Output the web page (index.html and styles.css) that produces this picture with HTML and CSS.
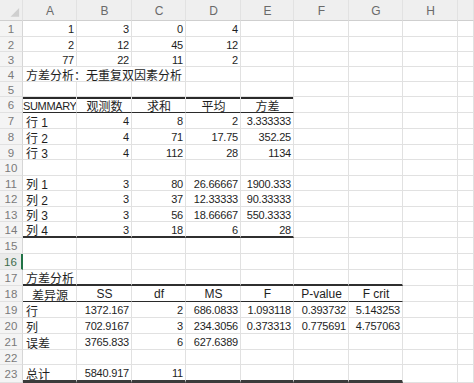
FILE: index.html
```html
<!DOCTYPE html>
<html lang="zh-CN">
<head>
<meta charset="utf-8">
<title>方差分析</title>
<link rel="stylesheet" href="styles.css">
</head>
<body>
<div class="sheet">
  <div class="r">
    <div class="corner"><svg width="23" height="20" viewBox="0 0 23 20"><polygon points="20,8 20,17 11,17" fill="#cfcfcf"/></svg></div>
    <div class="ch">A</div><div class="ch">B</div><div class="ch">C</div><div class="ch">D</div><div class="ch">E</div><div class="ch">F</div><div class="ch">G</div><div class="ch">H</div><div class="ch"></div>
  </div>
  <div class="r">
    <div class="rh">1</div><div class="n">1</div><div class="n">3</div><div class="n">0</div><div class="n">4</div><div></div><div></div><div></div><div></div><div></div>
  </div>
  <div class="r">
    <div class="rh">2</div><div class="n">2</div><div class="n">12</div><div class="n">45</div><div class="n">12</div><div></div><div></div><div></div><div></div><div></div>
  </div>
  <div class="r">
    <div class="rh">3</div><div class="n">77</div><div class="n">22</div><div class="n">11</div><div class="n">2</div><div></div><div></div><div></div><div></div><div></div>
  </div>
  <div class="r">
    <div class="rh">4</div><div class="t span3">方差分析：无重复双因素分析</div><div></div><div></div><div></div><div></div><div></div><div></div>
  </div>
  <div class="r">
    <div class="rh">5</div><div></div><div></div><div></div><div></div><div></div><div></div><div></div><div></div><div></div>
  </div>
  <div class="r">
    <div class="rh">6</div><div class="t hd sum">SUMMARY</div><div class="m hd">观测数</div><div class="m hd">求和</div><div class="m hd">平均</div><div class="m hd">方差</div><div></div><div></div><div></div><div></div>
  </div>
  <div class="r">
    <div class="rh">7</div><div class="t">行 1</div><div class="n">4</div><div class="n">8</div><div class="n">2</div><div class="n">3.333333</div><div></div><div></div><div></div><div></div>
  </div>
  <div class="r">
    <div class="rh">8</div><div class="t">行 2</div><div class="n">4</div><div class="n">71</div><div class="n">17.75</div><div class="n">352.25</div><div></div><div></div><div></div><div></div>
  </div>
  <div class="r">
    <div class="rh">9</div><div class="t">行 3</div><div class="n">4</div><div class="n">112</div><div class="n">28</div><div class="n">1134</div><div></div><div></div><div></div><div></div>
  </div>
  <div class="r">
    <div class="rh">10</div><div></div><div></div><div></div><div></div><div></div><div></div><div></div><div></div><div></div>
  </div>
  <div class="r">
    <div class="rh">11</div><div class="t">列 1</div><div class="n">3</div><div class="n">80</div><div class="n">26.66667</div><div class="n">1900.333</div><div></div><div></div><div></div><div></div>
  </div>
  <div class="r">
    <div class="rh">12</div><div class="t">列 2</div><div class="n">3</div><div class="n">37</div><div class="n">12.33333</div><div class="n">90.33333</div><div></div><div></div><div></div><div></div>
  </div>
  <div class="r">
    <div class="rh">13</div><div class="t">列 3</div><div class="n">3</div><div class="n">56</div><div class="n">18.66667</div><div class="n">550.3333</div><div></div><div></div><div></div><div></div>
  </div>
  <div class="r">
    <div class="rh">14</div><div class="t end2">列 4</div><div class="n end2">3</div><div class="n end2">18</div><div class="n end2">6</div><div class="n end2">28</div><div></div><div></div><div></div><div></div>
  </div>
  <div class="r">
    <div class="rh">15</div><div></div><div></div><div></div><div></div><div></div><div></div><div></div><div></div><div></div>
  </div>
  <div class="r">
    <div class="rh active">16</div><div></div><div></div><div></div><div></div><div></div><div></div><div></div><div></div><div></div>
  </div>
  <div class="r">
    <div class="rh">17</div><div class="t end2">方差分析</div><div class="end2"></div><div class="end2"></div><div class="end2"></div><div class="end2"></div><div class="end2"></div><div class="end2"></div><div></div><div></div>
  </div>
  <div class="r">
    <div class="rh">18</div><div class="m hd2">差异源</div><div class="m hd2">SS</div><div class="m hd2">df</div><div class="m hd2">MS</div><div class="m hd2">F</div><div class="m hd2">P-value</div><div class="m hd2">F crit</div><div></div><div></div>
  </div>
  <div class="r">
    <div class="rh">19</div><div class="t">行</div><div class="n">1372.167</div><div class="n">2</div><div class="n">686.0833</div><div class="n">1.093118</div><div class="n">0.393732</div><div class="n">5.143253</div><div></div><div></div>
  </div>
  <div class="r">
    <div class="rh">20</div><div class="t">列</div><div class="n">702.9167</div><div class="n">3</div><div class="n">234.3056</div><div class="n">0.373313</div><div class="n">0.775691</div><div class="n">4.757063</div><div></div><div></div>
  </div>
  <div class="r">
    <div class="rh">21</div><div class="t">误差</div><div class="n">3765.833</div><div class="n">6</div><div class="n">627.6389</div><div></div><div></div><div></div><div></div><div></div>
  </div>
  <div class="r">
    <div class="rh">22</div><div></div><div></div><div></div><div></div><div></div><div></div><div></div><div></div><div></div>
  </div>
  <div class="r">
    <div class="rh">23</div><div class="t end3">总计</div><div class="n end3">5840.917</div><div class="n end3">11</div><div class="end3"></div><div class="end3"></div><div class="end3"></div><div class="end3"></div><div></div><div></div>
  </div>
</div>
</body>
</html>
```
FILE: styles.css
```css
html, body {
  margin: 0;
  padding: 0;
  background: #ffffff;
}

.sheet {
  display: grid;
  grid-template-columns: 23px 54px 55px 54px 55px 53px 55px 54px 55px 1fr;
  grid-template-rows: 21px 16px 15px 15px 15px 15px 16px 16px 16px 15px 16px 15px 16px 15px 16px 16px 16px 16px 16px 16px 16px 16px 15px 18px;
  width: 474px;
  height: 383px;
  overflow: hidden;
  font-family: "Liberation Sans", "Noto Sans CJK SC", sans-serif;
  font-size: 11px;
  color: #1e1e1e;
}

.r {
  display: contents;
}

.r > div {
  box-sizing: border-box;
  border-right: 1px solid #e1e1e1;
  border-bottom: 1px solid #e1e1e1;
  display: flex;
  align-items: center;
  white-space: nowrap;
  overflow: hidden;
  padding: 1px 2px 0 3px;
  min-width: 0;
}

.corner {
  background: #efefef;
  padding: 0 !important;
  border-bottom-color: #cfcfcf !important;
}

.r > .ch {
  background: #efefef;
  color: #6a6a6a;
  font-size: 12px;
  justify-content: center;
  border-bottom-color: #cfcfcf;
  border-right-color: #e2e2e2;
}

.r > .rh {
  background: #f4f4f4;
  color: #7a7a7a;
  font-size: 11.5px;
  justify-content: center;
  padding: 1px 0 0 0;
  border-right-color: #d6d6d6;
}

.r > .rh.active {
  color: #3d6b4c;
  background: #ebebeb;
  border-right: 2px solid #217346;
}

.n {
  justify-content: flex-end;
  letter-spacing: -0.2px;
}

.r > .n {
  padding-right: 2px;
}

.t {
  justify-content: flex-start;
  font-size: 12px;
}

.m {
  justify-content: center;
  font-size: 12px;
}

.span3 {
  grid-column: span 3;
}

.r > .sum {
  padding-left: 0;
  font-size: 11px;
  letter-spacing: -0.35px;
}

.r > .hd {
  box-shadow: inset 0 2px 0 #2a2a2a;
  border-bottom-color: #2a2a2a;
  padding-top: 2px;
}

.r > .hd2 {
  border-bottom-color: #2a2a2a;
}

.r > .end2 {
  border-bottom: 2px solid #2f2f2f;
}

.r > .end3 {
  border-bottom: 3px solid #3b3b3b;
}
```
